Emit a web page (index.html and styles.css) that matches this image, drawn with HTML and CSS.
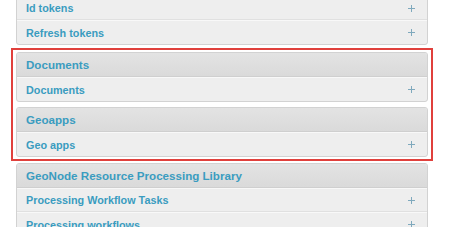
FILE: index.html
```html
<!DOCTYPE html>
<html lang="en">
<head>
    <meta charset="UTF-8">
    <meta name="viewport" content="width=device-width, initial-scale=1.0">
    <title>Site administration</title>
    <link rel="stylesheet" href="styles.css">
</head>
<body>
    <div class="content">
        <div class="module">
            <div class="row"><a href="#">Id tokens</a><span class="add"></span></div>
            <div class="row"><a href="#">Refresh tokens</a><span class="add"></span></div>
        </div>

        <!-- area marcada em vermelho -->
        <div class="highlight">
            <div class="module">
                <h2>Documents</h2>
                <div class="row"><a href="#">Documents</a><span class="add"></span></div>
            </div>
            <div class="module">
                <h2>Geoapps</h2>
                <div class="row"><a href="#">Geo apps</a><span class="add"></span></div>
            </div>
        </div>

        <div class="module">
            <h2>GeoNode Resource Processing Library</h2>
            <div class="row"><a href="#">Processing Workflow Tasks</a><span class="add"></span></div>
            <div class="row"><a href="#">Processing workflows</a><span class="add"></span></div>
        </div>
    </div>
</body>
</html>
```

FILE: styles.css
```css
:root {
    --link-color: #3a9cc0;
    --row-bg: #eeeeee;
    --border-color: #d2d2d2;
    --red: #e0403c;
}

* {
    margin: 0;
    padding: 0;
    box-sizing: border-box;
    font-family: 'Liberation Sans', Arial, sans-serif;
}

body {
    background: #ffffff;
    overflow: hidden;
}

.content {
    width: 412px;
    margin: -5px 0 0 16px;
}

.module {
    background: var(--row-bg);
    border: 1px solid var(--border-color);
    border-radius: 3px;
    overflow: hidden;
    margin-bottom: 5px;
}

.module h2 {
    height: 24px;
    display: flex;
    align-items: center;
    padding: 0 9px;
    font-size: 11.6px;
    font-weight: bold;
    color: var(--link-color);
    background: linear-gradient(#e3e3e3, #dadada);
    border-bottom: 1px solid #cfcfcf;
}

.row {
    height: 24px;
    display: flex;
    align-items: center;
    justify-content: space-between;
    padding: 0 12px 0 9px;
    border-top: 1px solid #f8f8f8;
    border-bottom: 1px solid #e0e0e0;
}

.row:last-child {
    border-bottom: none;
}

.row a {
    font-size: 10.8px;
    font-weight: bold;
    color: var(--link-color);
    text-decoration: none;
}

.add {
    position: relative;
    width: 7px;
    height: 7px;
}

.add::before,
.add::after {
    content: '';
    position: absolute;
    background: #7fa9bd;
}

.add::before {
    left: 0;
    top: 3px;
    width: 7px;
    height: 1px;
}

.add::after {
    left: 3px;
    top: 0;
    width: 1px;
    height: 7px;
}

.highlight {
    margin: -2px -5px 2px -5px;
    padding: 2px 3px;
    border: 2px solid var(--red);
}

.highlight .module:last-child {
    margin-bottom: 0;
}
```
